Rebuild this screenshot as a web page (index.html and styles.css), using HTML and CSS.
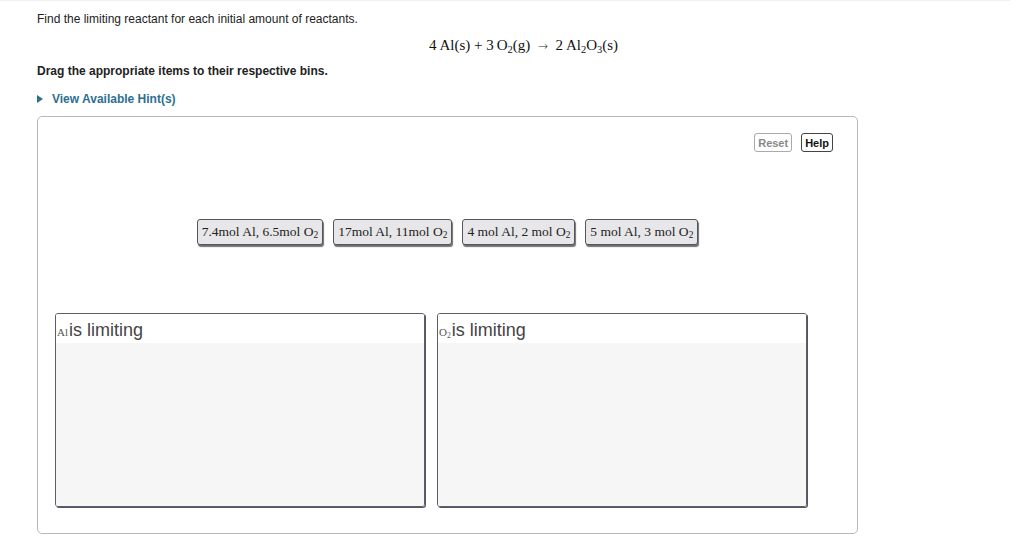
FILE: index.html
```html
<!DOCTYPE html>
<html lang="en">
<head>
<meta charset="utf-8">
<title>Limiting reactant</title>
<link rel="stylesheet" href="styles.css">
</head>
<body>
<div class="page">
  <p class="prompt">Find the limiting reactant for each initial amount of reactants.</p>
  <div class="equation">4&thinsp;Al(s)&nbsp;+&nbsp;3&thinsp;O<sub>2</sub>(g)&nbsp;&nbsp;<span class="arrow">&rarr;</span>&nbsp;&nbsp;2&thinsp;Al<sub>2</sub>O<sub>3</sub>(s)</div>
  <p class="instruction">Drag the appropriate items to their respective bins.</p>
  <div class="hint"><span class="hint-arrow"></span><span>View Available Hint(s)</span></div>

  <div class="workspace">
    <div class="toolbar">
      <button class="tool-btn reset" type="button">Reset</button>
      <button class="tool-btn help" type="button">Help</button>
    </div>
    <div class="items">
      <div class="item"><span>7.4mol Al, 6.5mol O<sub>2</sub></span></div>
      <div class="item"><span>17mol Al, 11mol O<sub>2</sub></span></div>
      <div class="item"><span>4 mol Al, 2 mol O<sub>2</sub></span></div>
      <div class="item"><span>5 mol Al, 3 mol O<sub>2</sub></span></div>
    </div>
    <div class="bins">
      <div class="bin">
        <div class="bin-title"><span><span class="chem">Al</span>is limiting</span></div>
        <div class="bin-body"></div>
      </div>
      <div class="bin">
        <div class="bin-title"><span><span class="chem">O<sub>2</sub></span>is limiting</span></div>
        <div class="bin-body"></div>
      </div>
    </div>
  </div>
</div>
</body>
</html>
```

FILE: styles.css
```css
html, body {
  margin: 0;
  background: #fff;
}

body {
  font-family: "Liberation Sans", Arial, sans-serif;
  color: #222;
}

.page {
  width: 973px;
  padding: 0 0 0 37px;
  border-top: 1px solid #f0f0f0;
}

.prompt {
  margin: 0;
  padding-top: 11px;
  font-size: 12px;
  line-height: 14px;
}

.equation {
  margin-top: 11px;
  text-align: center;
  font-family: "Liberation Serif", "DejaVu Serif", serif;
  font-size: 15px;
  line-height: 17px;
  color: #111;
}

.arrow {
  font-family: "DejaVu Sans", sans-serif;
  font-size: 12px;
  font-weight: 200;
  color: #333;
}

.equation sub,
.item sub,
.chem sub {
  font-size: 70%;
  line-height: 0;
  vertical-align: -0.25em;
}

.instruction {
  margin: 9px 0 0;
  font-size: 12px;
  line-height: 14px;
  font-weight: bold;
}

.hint {
  display: flex;
  align-items: center;
  gap: 9px;
  margin-top: 14px;
  font-size: 12px;
  line-height: 14px;
  font-weight: bold;
  color: #2d6f91;
}

.hint-arrow {
  width: 0;
  height: 0;
  border-top: 4px solid transparent;
  border-bottom: 4px solid transparent;
  border-left: 6px solid #2d6f91;
}

.workspace {
  box-sizing: border-box;
  width: 821px;
  height: 418px;
  margin-top: 10px;
  border: 1px solid #b8b8b8;
  border-radius: 5px;
  display: flex;
  flex-direction: column;
}

.toolbar {
  display: flex;
  justify-content: flex-end;
  gap: 9px;
  padding: 16px 24px 0 0;
}

.tool-btn {
  font-family: "Liberation Sans", Arial, sans-serif;
  font-size: 11px;
  font-weight: bold;
  line-height: 14px;
  height: 19px;
  padding: 1px 3px;
  background: #fff;
  border: 1px solid #888;
  border-radius: 3px;
}

.reset {
  color: #888;
  border-color: #aaa;
}

.help {
  color: #111;
  border-color: #444;
}

.items {
  display: flex;
  justify-content: center;
  gap: 10px;
  margin-top: 67px;
}

.item {
  box-sizing: border-box;
  height: 26px;
  padding: 0 4px;
  display: flex;
  align-items: center;
  font-family: "Liberation Serif", "DejaVu Serif", serif;
  font-size: 13.5px;
  color: #222;
  background: #e7e7ea;
  border: 1px solid #55565c;
  border-radius: 3px;
  box-shadow: 1px 2px 1px #6f6f76;
}

.bins {
  display: flex;
  gap: 12px;
  padding-left: 17px;
  margin-top: 68px;
}

.bin {
  box-sizing: border-box;
  width: 370px;
  height: 194px;
  border: 1px solid #5d5d66;
  border-radius: 3px;
  box-shadow: 1px 1px 0 #55556a;
  display: flex;
  flex-direction: column;
  overflow: hidden;
}

.bin-title {
  box-sizing: border-box;
  height: 29px;
  padding: 4px 0 0 1px;
  display: flex;
  align-items: center;
  background: #fff;
  font-size: 18px;
  color: #444;
}

.chem {
  font-family: "Liberation Serif", "DejaVu Serif", serif;
  font-size: 11px;
  color: #555;
  margin-right: 1px;
}

.bin-body {
  flex: 1;
  background: #f6f6f6;
}
```
